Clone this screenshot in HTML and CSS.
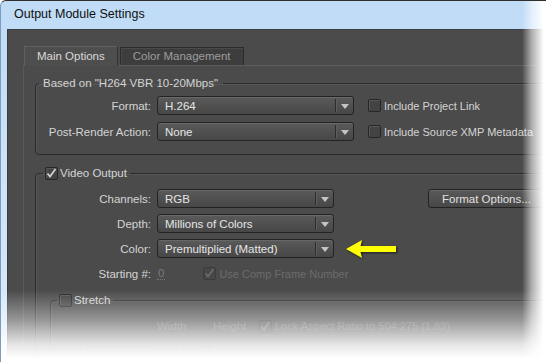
FILE: index.html
```html
<!DOCTYPE html>
<html lang="en">

<head>
    <meta charset="UTF-8">
    <meta name="viewport" content="width=device-width, initial-scale=1.0">
    <title>Output Module Settings</title>
    <link rel="stylesheet" href="styles.css">
</head>

<body>
    <div class="window">
        <div class="titlebar">Output Module Settings</div>
        <div class="client">
            <div class="tabs">
                <div class="tab active">Main Options</div>
                <div class="tab">Color Management</div>
            </div>
            <div class="pane">
                <fieldset class="group">
                    <legend>Based on "H264 VBR 10-20Mbps"</legend>
                    <div class="form form-based">
                        <label>Format:</label>
                        <div class="select"><span>H.264</span><i class="arrow"></i></div>
                        <div class="check"><span class="box"></span>Include Project Link</div>

                        <label>Post-Render Action:</label>
                        <div class="select"><span>None</span><i class="arrow"></i></div>
                        <div class="check"><span class="box"></span>Include Source XMP Metadata</div>
                    </div>
                </fieldset>

                <fieldset class="group video">
                    <legend class="check-legend">
                        <span class="box checked">
                            <svg viewBox="0 0 13 13" width="13" height="13"><path d="M2.5 6.5 L5 9.5 L10.5 2" fill="none" stroke="#d0d0d0" stroke-width="1.8"/></svg>
                        </span>Video Output
                    </legend>
                    <div class="form form-video">
                        <label>Channels:</label>
                        <div class="select"><span>RGB</span><i class="arrow"></i></div>
                        <div><button class="btn">Format Options...</button></div>

                        <label>Depth:</label>
                        <div class="select"><span>Millions of Colors</span><i class="arrow"></i></div>
                        <div></div>

                        <label>Color:</label>
                        <div class="select"><span>Premultiplied (Matted)</span><i class="arrow"></i></div>
                        <div>
                            <svg class="pointer" viewBox="0 0 52 20" width="52" height="20">
                                <path d="M1 10 L17 1 L15.5 7 L51 7 L51 13 L15.5 13 L17 19 Z" fill="#ffff00"/>
                            </svg>
                        </div>

                        <label>Starting #:</label>
                        <div class="start">
                            <span class="num">0</span>
                            <span class="check disabled">
                                <span class="box checked">
                                    <svg viewBox="0 0 13 13" width="13" height="13"><path d="M2.5 6.5 L5 9.5 L10.5 2" fill="none" stroke="#6a6a6a" stroke-width="1.8"/></svg>
                                </span>Use Comp Frame Number
                            </span>
                        </div>
                    </div>

                    <fieldset class="group stretch">
                        <legend class="check-legend"><span class="box"></span>Stretch</legend>
                        <div class="dims">
                            <span></span>
                            <span class="dim">Width</span>
                            <span></span>
                            <span class="dim">Height</span>
                            <span class="check disabled">
                                <span class="box checked">
                                    <svg viewBox="0 0 13 13" width="13" height="13"><path d="M2.5 6.5 L5 9.5 L10.5 2" fill="none" stroke="#6a6a6a" stroke-width="1.8"/></svg>
                                </span>Lock Aspect Ratio to 504:275 (1.83)
                            </span>

                            <span class="dim label">Rendering at:</span>
                            <span class="dim">1008</span>
                            <span class="dim">x</span>
                            <span class="dim">550</span>
                            <span></span>
                        </div>
                    </fieldset>
                </fieldset>
            </div>
        </div>
        <div class="fade-right"></div>
        <div class="fade-bottom"></div>
    </div>
</body>

</html>
```

FILE: styles.css
```css
* {
    box-sizing: border-box;
}

body {
    margin: 0;
    width: 546px;
    height: 362px;
    overflow: hidden;
    background: #fff;
    font-family: "Liberation Sans", Arial, sans-serif;
    font-size: 11px;
    color: #d4d4d4;
}

.window {
    position: relative;
    height: 362px;
    background: linear-gradient(to bottom, #bfdbf6, #dcebfa);
    border-top: 1px solid #2e2e2e;
    border-left: 1px solid #7d9bbd;
    border-top-left-radius: 6px;
    padding-left: 6px;
    overflow: hidden;
}

.titlebar {
    height: 28px;
    line-height: 27px;
    padding-left: 7px;
    font-size: 12.5px;
    color: #101010;
}

.client {
    height: 340px;
    background: #4b4b4b;
    border-top: 1px solid #3a3d42;
    border-left: 1px solid #3a3d42;
    padding-top: 16px;
    overflow: hidden;
}

.tabs {
    display: flex;
    align-items: flex-end;
    margin-left: 15px;
}

.tab {
    height: 18px;
    line-height: 17px;
    padding: 0 12px;
    margin-left: 2px;
    background: #3d3d3d;
    border: 1px solid #2b2b2b;
    border-bottom: none;
    color: #9d9d9d;
    font-size: 11.5px;
    box-shadow: inset 1px 1px 0 #4a4a4a;
}

.tab.active {
    position: relative;
    margin-left: 1px;
    height: 20px;
    line-height: 19px;
    margin-bottom: -1px;
    padding: 0 12px;
    background: #4e4e4e;
    border: 1px solid #606060;
    border-bottom: none;
    border-right-color: #333;
    color: #dadada;
    box-shadow: none;
}

.pane {
    margin-left: 15px;
    border-top: 1px solid #5d5d5d;
    border-left: 1px solid #5a5a5a;
    height: 300px;
}

.group {
    margin: 10px 0 0 11px;
    width: 620px;
    padding: 6px 0 13px 0;
    border: 1px solid #2a2a2a;
    border-radius: 4px;
    box-shadow: inset 1px 1px 0 #575757;
}

.group legend {
    margin-left: 3px;
    padding: 0 5px 0 4px;
    line-height: 14px;
    color: #d4d4d4;
    font-size: 11.5px;
}

.group legend.check-legend {
    display: flex;
    align-items: center;
    gap: 2px;
    margin-left: 7px;
    padding: 0 3px 0 2px;
}

.video {
    margin-top: 11px;
    padding-top: 9px;
    height: 300px;
}

.stretch {
    margin: 10px 0 0 14px;
    padding-top: 11px;
    width: 600px;
    height: 100px;
}

.stretch legend.check-legend {
    margin-left: 6px;
}

.form {
    display: grid;
    grid-template-columns: 115px 197px auto;
    grid-auto-rows: 19px;
    column-gap: 6px;
    row-gap: 7px;
    align-items: center;
}

.form-video {
    grid-template-columns: 115px 177px auto;
    row-gap: 6px;
}

.form label {
    text-align: right;
    font-size: 11.5px;
    color: #d4d4d4;
}

.select {
    height: 19px;
    display: flex;
    align-items: center;
    border: 1px solid #232323;
    border-radius: 3px;
    background: linear-gradient(to bottom, #5a5a5a, #474747);
    box-shadow: inset 0 1px 0 #686868;
    color: #e6e6e6;
    font-size: 11.5px;
}

.select span {
    flex: 1;
    padding-left: 7px;
}

.select .arrow {
    width: 18px;
    height: 13px;
    border-left: 1px solid #2c2c2c;
    box-shadow: inset 1px 0 0 #5e5e5e;
    position: relative;
}

.select .arrow::after {
    content: "";
    position: absolute;
    left: 5px;
    top: 5px;
    border-left: 4px solid transparent;
    border-right: 4px solid transparent;
    border-top: 5px solid #c4c4c4;
}

.check {
    display: flex;
    align-items: center;
    gap: 3px;
    margin-left: 8px;
    font-size: 11px;
    color: #d4d4d4;
}

.box {
    width: 13px;
    height: 13px;
    border: 1px solid #262626;
    border-radius: 2px;
    background: #434343;
    box-shadow: inset 1px 1px 0 #585858;
    display: inline-flex;
    flex-shrink: 0;
}

.box.checked svg {
    margin: -1px;
}

.btn {
    margin-left: 88px;
    width: 116px;
    height: 19px;
    padding: 0 0 0 13px;
    border: 1px solid #232323;
    border-radius: 3px;
    background: linear-gradient(to bottom, #5a5a5a, #474747);
    box-shadow: inset 0 1px 0 #686868;
    color: #e0e0e0;
    font-family: "Liberation Sans", Arial, sans-serif;
    font-size: 11.5px;
    text-align: left;
}

.pointer {
    display: block;
    margin-left: 5px;
    filter: drop-shadow(1px 1px 1px rgba(0, 0, 0, 0.6));
}

.start {
    grid-column: 2 / 4;
    display: flex;
    align-items: center;
}

.num {
    color: #7a7a7a;
    font-size: 11.5px;
    padding: 0 1px;
    border-bottom: 1px dotted #7a7a7a;
    line-height: 12px;
}

.start .check {
    margin-left: 38px;
}

.check.disabled,
.disabled {
    color: #6c6c6c;
}

.disabled .box {
    background: #474747;
    border-color: #3a3a3a;
    box-shadow: none;
}

.dims {
    display: grid;
    grid-template-columns: 100px 52px 10px 46px auto;
    grid-auto-rows: 16px;
    row-gap: 8px;
    align-items: center;
    color: #6e6e6e;
    font-size: 11.5px;
}

.dims .dim:nth-child(2),
.dims .dim:nth-child(7) {
    padding-left: 6px;
}

.dims .label {
    text-align: right;
}

.dims .check {
    margin-left: 0;
}

.fade-right {
    position: absolute;
    top: 0;
    right: 0;
    width: 24px;
    height: 100%;
    background: linear-gradient(to right, rgba(255, 255, 255, 0), rgba(255, 255, 255, 0.55) 40%, #fff 90%);
}

.fade-bottom {
    position: absolute;
    left: 0;
    bottom: 0;
    width: 100%;
    height: 72px;
    background: linear-gradient(to bottom, rgba(255, 255, 255, 0), rgba(255, 255, 255, 0.4) 40%, rgba(255, 255, 255, 0.85) 75%, #fff 95%);
}
```
